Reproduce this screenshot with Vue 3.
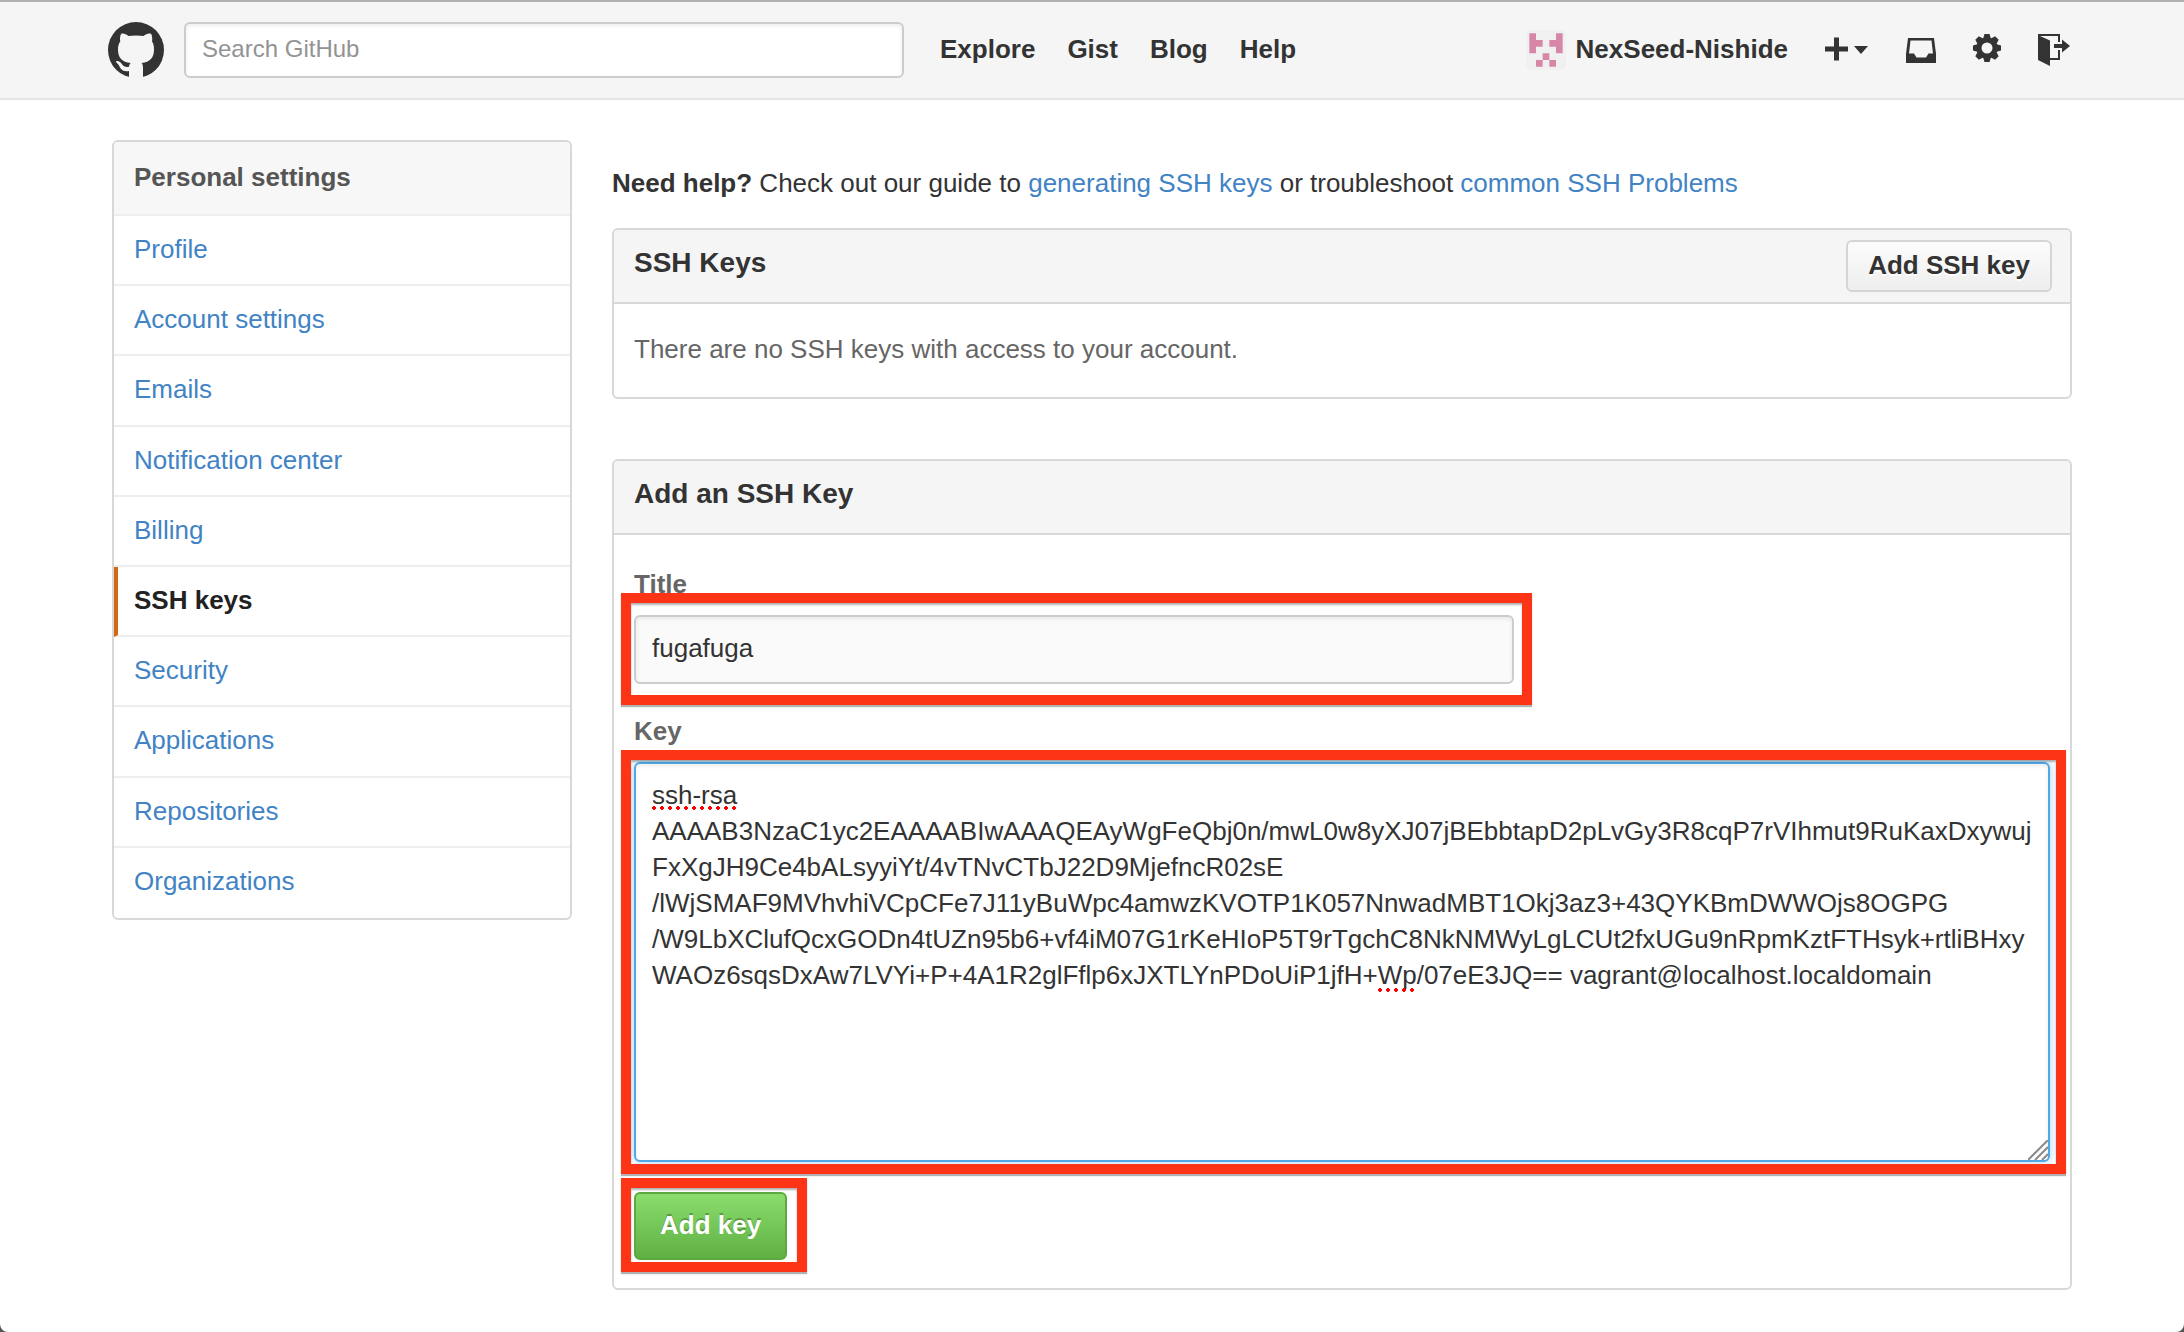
<template>
  <div class="page">
    <header class="header">
      <div class="container header-inner">
        <a href="#" class="logo" aria-label="GitHub">
          <svg viewBox="0 0 56 56" width="56" height="56">
            <circle cx="28" cy="28" r="28" fill="#333" />
            <path
              fill="#f5f5f5"
              d="M13 12C15 11 18 12 20.500 14C25 13.300 31 13.300 35.500 14C38 12 41 11 43.200 12C44.200 14 44.500 17 44 19.500C45.500 21.500 46 24 46 27.500C46 36 42 40 33.700 41C34.700 42 35 44 35 46V57H21V49C14 50 12.500 46.500 11 43.500C10 41.500 8 41 8 39.800C8 38.500 11 38.800 12.800 40.800C15 43.500 16 45.800 21 44.700C21.200 43 21.700 42 22.700 41C14 40 10 36 10 27.500C10 24 10.700 21.500 12.300 19.500C11.700 17 12 14 13 12Z"
            />
          </svg>
        </a>
        <input v-model="query" class="search" type="text" placeholder="Search GitHub" aria-label="Search GitHub" />
        <nav class="nav">
          <a v-for="n in nav" :key="n" href="#">{{ n }}</a>
        </nav>
        <div class="user-nav">
          <a href="#" class="user">
            <svg class="avatar" viewBox="0 0 12 12" width="40" height="40" fill="#d687a7">
              <path d="M1 1h2v2h2v2h-2v2h-2zM11 1h-2v2h-2v2h2v2h2zM5 7h2v2h-2zM3 9h2v2h-2zM7 9h2v2h-2z" />
            </svg>
            <span>NexSeed-Nishide</span>
          </a>
          <a href="#" class="icon" aria-label="Create new">
            <svg viewBox="0 0 44 32" width="44" height="32" fill="#333">
              <path d="M9 3.500h5v9h9v5h-9v9h-5v-9h-9v-5h9zM29 12h14l-7 8z" />
            </svg>
          </a>
          <a href="#" class="icon" aria-label="Notifications">
            <svg viewBox="0 0 30 32" width="30" height="32" fill="#333">
              <path fill-rule="evenodd" d="M2 4h26l2 16v9h-30v-9zM4.500 6.500L3 19.500h5l2.500 4h9.500l2.500-4h4.500L25.500 6.500z" />
            </svg>
          </a>
          <a href="#" class="icon" aria-label="Settings">
            <svg viewBox="-14 -16 28 32" width="28" height="32" fill="#333">
              <circle r="8" cy="-2" fill="none" stroke="#333" stroke-width="5" />
              <g transform="translate(0 -2)">
                <path v-for="i in 8" :key="i" :transform="`rotate(${i * 45})`" d="M-4-9L-2.500-14h5L4-9z" />
              </g>
            </svg>
          </a>
          <a href="#" class="icon" aria-label="Sign out">
            <svg viewBox="0 0 32 32" width="32" height="32" fill="#333">
              <path d="M0 0h22v8h-2v-6h-18l10 4.500v17.500h8v-8h2v10h-10v6l-12-6z" />
              <path d="M16 10h8v-4.500l8 6.500l-8 6.500v-4.500h-8z" />
            </svg>
          </a>
        </div>
      </div>
    </header>

    <div class="container columns">
      <nav class="menu">
        <h3>Personal settings</h3>
        <div class="menu-items">
          <a v-for="item in menu" :key="item" href="#" :class="{ selected: item === current }">{{ item }}</a>
        </div>
      </nav>

      <main class="content">
        <p class="help">
          <strong>Need help?</strong> Check out our guide to <a href="#">generating SSH keys</a> or troubleshoot <a href="#">common SSH Problems</a>
        </p>

        <section class="box">
          <div class="box-head">
            <h3>SSH Keys</h3>
            <button type="button" class="btn">Add SSH key</button>
          </div>
          <p class="empty">There are no SSH keys with access to your account.</p>
        </section>

        <section class="box">
          <div class="box-head">
            <h3>Add an SSH Key</h3>
          </div>
          <form class="form" @submit.prevent>
            <label for="key-title">Title</label>
            <div class="field title-field">
              <input id="key-title" v-model="title" type="text" />
              <span class="mark mark-title"></span>
            </div>
            <label for="key-body">Key</label>
            <div class="field">
              <textarea id="key-body" v-model="key" spellcheck="false"></textarea>
              <!-- misspelling dots under "ssh-rsa" and "Wp" -->
              <span class="typo typo-rsa"></span>
              <span class="typo typo-wp"></span>
              <svg class="grip" viewBox="0 0 20 20" width="20" height="20" fill="none" stroke="#8a8a8a" stroke-width="2">
                <path d="M0 20L20 0M7 20L20 7M14 20L20 14" />
              </svg>
              <span class="mark mark-key"></span>
            </div>
            <div class="field submit-field">
              <button type="submit" class="btn-primary">Add key</button>
              <span class="mark mark-submit"></span>
            </div>
          </form>
        </section>
      </main>
    </div>
  </div>
</template>

<script setup>
import { ref } from 'vue';

const nav = ['Explore', 'Gist', 'Blog', 'Help'];
const menu = [
  'Profile', 'Account settings', 'Emails', 'Notification center', 'Billing',
  'SSH keys', 'Security', 'Applications', 'Repositories', 'Organizations',
];
const current = 'SSH keys';

const query = ref('');
const title = ref('fugafuga');
const key = ref([
  'ssh-rsa',
  'AAAAB3NzaC1yc2EAAAABIwAAAQEAyWgFeQbj0n/mwL0w8yXJ07jBEbbtapD2pLvGy3R8cqP7rVIhmut9RuKaxDxywuj',
  'FxXgJH9Ce4bALsyyiYt/4vTNvCTbJ22D9MjefncR02sE',
  '/lWjSMAF9MVhvhiVCpCFe7J11yBuWpc4amwzKVOTP1K057NnwadMBT1Okj3az3+43QYKBmDWWOjs8OGPG',
  '/W9LbXClufQcxGODn4tUZn95b6+vf4iM07G1rKeHIoP5T9rTgchC8NkNMWyLgLCUt2fxUGu9nRpmKztFTHsyk+rtliBHxy',
  'WAOz6sqsDxAw7LVYi+P+4A1R2glFflp6xJXTLYnPDoUiP1jfH+Wp/07eE3JQ== vagrant@localhost.localdomain',
].join('\n'));
</script>

<style>
html{ background:#555;}
body{ margin:0;}
</style>

<style scoped>
.page{ box-sizing:border-box; min-height:100vh; background:#fff; border-top:2px solid #b0b0b0; border-radius:0 0 8px 8px; color:#333; font:26px/36px "Liberation Sans", Arial, sans-serif;}
.page *{ box-sizing:border-box;}
a{ color:#4183c4; text-decoration:none;}
h3, p{ margin:0;}
input, textarea, button{ font:inherit; color:#333;}
svg{ display:block;}
.container{ max-width:1960px; margin:0 auto;}

.header{ background:#f5f5f5; border-bottom:2px solid #e5e5e5;}
.header-inner{ display:flex; align-items:center; padding:20px 0;}
.header a{ color:#333; font-weight:bold;}
.logo{ margin:0 20px 0 -4px;}
.search{ flex:0 1 720px; min-width:0; height:56px; padding:0 16px 2px; font-size:24px; background:#fff; border:2px solid #ccc; border-radius:6px; box-shadow:inset 0 2px 4px rgba(0,0,0,.075);}
.search::placeholder{ color:#939393; opacity:1;}
.nav{ display:flex; gap:32px; margin-left:36px; padding-bottom:2px;}
.user-nav{ display:flex; align-items:center; gap:37px; margin-left:auto; padding-right:2px;}
.user{ display:flex; align-items:center; gap:10px;}
.user span{ padding-bottom:2px;}
.avatar{ background:#f0f0f0; border-radius:6px;}

.columns{ display:flex; align-items:flex-start; gap:40px; padding:40px 0;}
.menu{ flex:0 0 460px; border:2px solid #d8d8d8; border-radius:6px; overflow:hidden;}
.menu h3{ padding:17px 20px 19px; font-size:26px; line-height:36px; color:#555; background:#f7f7f7; border-bottom:2px solid #eee;}
.menu-items{ display:grid; grid-auto-rows:1fr; min-height:702px;}
.menu-items a{ padding:15px 20px 17px; border-bottom:2px solid #eee;}
.menu-items a:last-child{ border-bottom:0;}
.menu-items .selected{ padding-left:16px; border-left:4px solid #d26911; color:#222; font-weight:bold;}

.content{ flex:1; min-width:0; padding-top:25px;}
.help{ margin-bottom:27px;}
.box{ margin-bottom:60px; border:2px solid #d8d8d8; border-radius:6px;}
.box:last-child{ margin-bottom:0;}
.box-head{ display:flex; justify-content:space-between; align-items:flex-start; padding:0 18px 0 20px; background:#f5f5f5; border-bottom:2px solid #d8d8d8; border-radius:4px 4px 0 0;}
.box-head h3{ padding:15px 0 21px; font-size:28px; line-height:36px;}
.btn{ height:52px; margin-top:10px; padding:0 20px 2px; font-weight:bold; background:linear-gradient(#fcfcfc, #eee); border:2px solid #d5d5d5; border-radius:6px; text-shadow:0 2px 0 rgba(255,255,255,.9); cursor:pointer;}
.empty{ padding:27px 20px 30px; color:#666;}

.form{ padding:31px 20px 28px;}
.form label{ display:block; margin-bottom:13px; color:#666; font-weight:bold;}
.field{ position:relative; margin-bottom:30px;}
.title-field{ max-width:880px; margin-bottom:29px;}
.title-field input{ display:block; width:100%; height:69px; padding:0 16px 2px; background:#fafafa; border:2px solid #ccc; border-radius:6px; box-shadow:inset 0 2px 4px rgba(0,0,0,.075);}
textarea{ display:block; width:100%; height:400px; padding:13px 16px; background:#fff; border:2px solid #51a7e8; border-radius:6px; outline:0; resize:none; white-space:pre; overflow:hidden; box-shadow:inset 0 2px 4px rgba(0,0,0,.075), 0 0 10px rgba(81,167,232,.5);}
.submit-field{ width:fit-content; margin-bottom:0;}
.btn-primary{ display:block; height:68px; padding:0 24px 2px; color:#fff; font-weight:bold; background:linear-gradient(#8add6d, #60b044); border:2px solid #5ca941; border-radius:6px; text-shadow:0 -2px 0 rgba(0,0,0,.25); cursor:pointer;}

/* red callouts drawn over the fields */
.mark{ position:absolute; border:10px solid #fd3516; pointer-events:none; box-shadow:0 2px 1px rgba(0,0,0,.3), inset 0 2px 2px rgba(0,0,0,.3);}
.mark-title{ inset:-22px -18px -21px -13px;}
.mark-key{ inset:-12px -16px -12px -13px;}
.mark-submit{ inset:-14px -20px -12px -13px;}

.typo{ position:absolute; height:4px; background:radial-gradient(circle at 2px 2px, #f00 1px, #f00 2px, transparent 2px) 0 0/8px 4px;}
.typo-rsa{ top:44px; left:18px; width:84px;}
.typo-wp{ top:226px; left:744px; width:38px;}
.grip{ position:absolute; right:2px; bottom:2px;}
</style>
